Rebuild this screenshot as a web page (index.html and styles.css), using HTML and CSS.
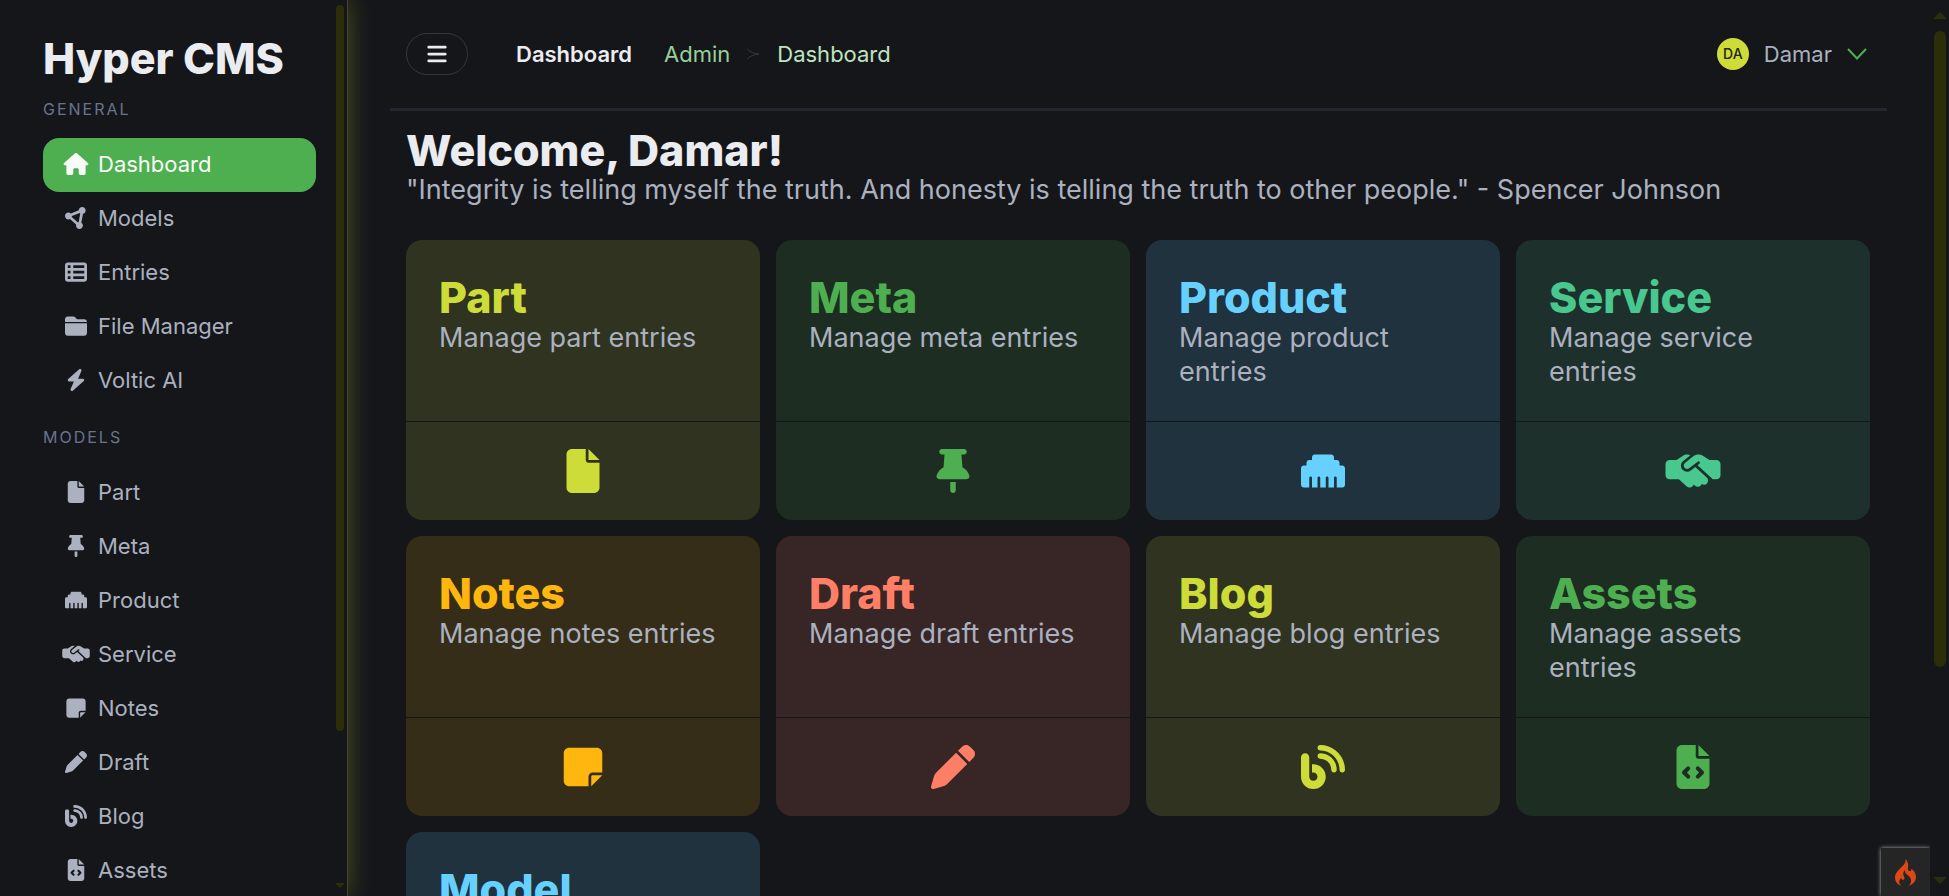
FILE: index.html
```html
<!DOCTYPE html>
<html lang="en">
<head>
<meta charset="utf-8">
<meta name="viewport" content="width=device-width, initial-scale=1">
<title>Hyper CMS - Dashboard</title>
<link rel="stylesheet" href="styles.css">
</head>
<body>
<svg class="sprite" aria-hidden="true">
  <symbol id="i-house" viewBox="0 0 576 512"><path d="M575.8 255.5c0 18-15 32.100-32 32.100h-32l.7 160.200c0 2.700-.2 5.400-.5 8.100V472c0 22.100-17.900 40-40 40H392c-22.100 0-40-17.900-40-40V384c0-17.700-14.300-32-32-32H256c-17.700 0-32 14.300-32 32v88c0 22.100-17.900 40-40 40H104c-22.100 0-40-17.900-40-40V287.600H32c-18 0-32-14-32-32.100c0-9 3-17 10-24L266.400 8c7-7 15-8 22-8s15 2 21 7L564.800 231.500c8 7 12 15 11 24z"/></symbol>
  <symbol id="i-nodes" viewBox="0 0 512 512"><path d="M418.400 157.900c35.300-8.300 61.600-40 61.600-77.900c0-44.200-35.800-80-80-80c-43.400 0-78.700 34.500-80 77.500L136.200 151.100C121.700 136.800 101.900 128 80 128c-44.200 0-80 35.800-80 80s35.800 80 80 80c12.200 0 23.800-2.700 34.100-7.600L259.700 407.800c-2.400 7.600-3.700 15.800-3.700 24.200c0 44.200 35.800 80 80 80s80-35.800 80-80c0-27.700-14-52.100-35.400-66.400l37.800-207.700zM156.300 232.200c2.200-6.900 3.500-14.200 3.700-21.700l183.800-73.500c3.600 3.500 7.400 6.700 11.600 9.500L317.600 354.100c-5.500 1.300-10.800 3.100-15.800 5.500L156.300 232.200z"/></symbol>
  <symbol id="i-list" viewBox="0 0 512 512"><path d="M0 96C0 60.700 28.700 32 64 32H448c35.300 0 64 28.700 64 64V416c0 35.300-28.700 64-64 64H64c-35.300 0-64-28.700-64-64V96zm64 0v64h64V96H64zm384 0H192v64H448V96zM64 224v64h64V224H64zm384 0H192v64H448V224zM64 352v64h64V352H64zm384 0H192v64H448V352z"/></symbol>
  <symbol id="i-folder" viewBox="0 0 512 512"><path d="M448 480H64c-35.300 0-64-28.700-64-64V192H512V416c0 35.300-28.700 64-64 64zm64-320H0V96C0 60.700 28.700 32 64 32H192c20.100 0 39.100 9.500 51.200 25.600l19.200 25.600c6 8.100 15.500 12.800 25.600 12.800H448c35.300 0 64 28.700 64 64z"/></symbol>
  <symbol id="i-bolt" viewBox="0 0 448 512"><path d="M349.400 44.600c5.900-13.700 1.500-29.700-10.600-38.500s-28.600-8-39.900 1.800l-256 224c-10 8.800-13.600 22.900-8.900 35.300S50.700 288 64 288H175.500L98.600 467.400c-5.900 13.700-1.500 29.700 10.600 38.500s28.600 8 39.900-1.800l256-224c10-8.800 13.600-22.900 8.900-35.300s-16.600-20.700-30-20.700H272.500L349.400 44.600z"/></symbol>
  <symbol id="i-file" viewBox="0 0 384 512"><path d="M0 64C0 28.700 28.700 0 64 0H224V128c0 17.700 14.300 32 32 32H384V448c0 35.300-28.700 64-64 64H64c-35.300 0-64-28.700-64-64V64zm384 64H256V0L384 128z"/></symbol>
  <symbol id="i-pin" viewBox="0 0 384 512"><path d="M32 32C32 14.300 46.300 0 64 0H320c17.700 0 32 14.300 32 32s-14.300 32-32 32H290.500l11.400 148.200c36.700 19.900 65.700 53.200 79.500 94.700l1 3c3.300 9.800 1.600 20.500-4.400 28.800s-15.700 13.300-26 13.300H32c-10.300 0-19.900-4.900-26-13.300s-7.700-19.100-4.400-28.800l1-3c13.800-41.500 42.800-74.800 79.500-94.700L93.500 64H64C46.300 64 32 49.700 32 32zM160 384h64v96c0 17.700-14.300 32-32 32s-32-14.300-32-32V384z"/></symbol>
  <symbol id="i-ethernet" viewBox="0 0 512 512"><path d="M0 224V416c0 17.700 14.300 32 32 32H96V336c0-8.800 7.200-16 16-16s16 7.200 16 16V448h64V336c0-8.800 7.200-16 16-16s16 7.200 16 16V448h64V336c0-8.800 7.200-16 16-16s16 7.200 16 16V448h64V336c0-8.800 7.200-16 16-16s16 7.200 16 16V448h64c17.700 0 32-14.300 32-32V224c0-17.700-14.300-32-32-32H448V160c0-17.700-14.300-32-32-32H384V96c0-17.700-14.300-32-32-32H160c-17.700 0-32 14.300-32 32v32H96c-17.700 0-32 14.300-32 32v32H32c-17.700 0-32 14.300-32 32z"/></symbol>
  <symbol id="i-handshake" viewBox="0 0 640 512"><path d="M323.400 85.200l-96.800 78.400c-16.100 13-19.200 36.400-7 53.100c12.900 17.800 38 21.300 55.300 7.800l99.300-77.200c7-5.400 17-4.200 22.500 2.800s4.200 17-2.800 22.500l-20.900 16.200L550.200 352H592c26.500 0 48-21.500 48-48V176c0-26.500-21.500-48-48-48H511.300l-3.900-2.500L434.800 79c-15.300-9.800-33.200-15-51.400-15c-21.800 0-43 7.500-60 21.200zm22.800 124.400l-51.700 40.200C263 274.300 217.300 268 193.700 235.600c-22.200-30.500-16.600-73.100 12.700-96.800l83.200-67.300c-11.600-4.900-24.100-7.400-36.800-7.400C234 64 215.700 69.600 200 80l-72 48H48c-26.500 0-48 21.500-48 48V304c0 26.500 21.500 48 48 48H156.200l91.400 83.400c19.600 17.900 49.900 16.500 67.800-3.100c5.500-6.100 9.200-13.200 11.100-20.600l17 15.600c19.500 17.900 49.900 16.600 67.800-2.900c4.500-4.900 7.800-10.600 9.900-16.500c19.400 13 45.800 10.300 62.100-7.500c17.900-19.500 16.600-49.900-2.900-67.800l-134.200-123z"/></symbol>
  <symbol id="i-note" viewBox="0 0 448 512"><path d="M64 32C28.700 32 0 60.700 0 96V416c0 35.300 28.700 64 64 64H288V368c0-26.500 21.500-48 48-48H448V96c0-35.300-28.700-64-64-64H64zM448 352H336c-8.800 0-16 7.200-16 16V480l32-32 64-64 32-32z"/></symbol>
  <symbol id="i-pen" viewBox="0 0 512 512"><path d="M362.700 19.300L314.300 67.700 444.300 197.700l48.400-48.400c25-25 25-65.500 0-90.500L453.300 19.300c-25-25-65.500-25-90.500 0zm-71 71L58.600 323.500c-10.400 10.400-18 23.300-22.200 37.400L1 481.200C-1.500 489.700 .8 498.800 7 505s15.300 8.500 23.700 6.100l120.300-35.400c14.100-4.200 27-11.800 37.400-22.200L421.700 220.300 291.700 90.300z"/></symbol>
  <symbol id="i-blog" viewBox="0 0 512 512"><path d="M192 32c0 17.700 14.300 32 32 32c123.700 0 224 100.300 224 224c0 17.700 14.300 32 32 32s32-14.300 32-32C512 128.900 383.100 0 224 0c-17.700 0-32 14.300-32 32zm0 96c0 17.700 14.300 32 32 32c70.700 0 128 57.300 128 128c0 17.700 14.300 32 32 32s32-14.300 32-32c0-106-86-192-192-192c-17.700 0-32 14.300-32 32zM96 144c0-26.500-21.500-48-48-48S0 117.500 0 144V368c0 79.500 64.500 144 144 144s144-64.500 144-144s-64.500-144-144-144H128v96h16c26.500 0 48 21.500 48 48s-21.500 48-48 48s-48-21.500-48-48V144z"/></symbol>
  <symbol id="i-code" viewBox="0 0 384 512"><path d="M64 0C28.700 0 0 28.700 0 64V448c0 35.300 28.700 64 64 64H320c35.300 0 64-28.700 64-64V160H256c-17.700 0-32-14.300-32-32V0H64zM256 0V128H384L256 0zM153 289l-31 31 31 31c9.400 9.400 9.400 24.600 0 33.900s-24.600 9.400-33.900 0L71 337c-9.400-9.400-9.400-24.600 0-33.900l48-48c9.400-9.400 24.600-9.400 33.900 0s9.400 24.600 0 33.900zM265 255l48 48c9.400 9.400 9.400 24.600 0 33.900l-48 48c-9.400 9.400-24.600 9.400-33.900 0s-9.400-24.600 0-33.900l31-31-31-31c-9.400-9.400-9.400-24.600 0-33.900s24.600-9.400 33.900 0z"/></symbol>
  <symbol id="i-bars" viewBox="0 0 448 512"><path d="M32 64H416a32 32 0 0 1 0 64H32a32 32 0 0 1 0-64zM32 224H416a32 32 0 0 1 0 64H32a32 32 0 0 1 0-64zM32 384H416a32 32 0 0 1 0 64H32a32 32 0 0 1 0-64z"/></symbol>
  <symbol id="i-flame" viewBox="0 0 21 27"><path d="M10.500 0C11 3.500 9 5.500 6 8.500C3 11.500 0 14.500 0 18.500C0 22.500 2.500 25.500 6.500 26.800C4.800 25.500 4 24 4.200 22.300C4.400 20.800 5.300 19.700 6.500 18.800C6.200 20.200 7 21 8 20.800C10.500 20.300 9.200 17.500 8.500 16.500C8 14.500 8.300 12.500 10 11.300C9.700 14.500 12 15.300 14 17.200C16.800 20 17 24 13.500 26.800C18 25.500 21 22 21 18C21 14.500 19 11.500 16.200 9.500C16.800 11.500 15.500 12.500 14.300 12C12.300 11.200 13 9 13.200 7C13.300 4 12 1.500 10.500 0z"/></symbol>
</svg>

<div class="layout">
  <aside class="sidebar">
    <div class="sidebar-body">
      <a class="brand" href="#">Hyper CMS</a>
      <p class="menu-label">General</p>
      <nav class="menu" aria-label="General">
        <a class="menu-link is-active" href="#"><span class="menu-icon"><svg class="icon"><use href="#i-house"/></svg></span>Dashboard</a>
        <a class="menu-link" href="#"><span class="menu-icon"><svg class="icon"><use href="#i-nodes"/></svg></span>Models</a>
        <a class="menu-link" href="#"><span class="menu-icon"><svg class="icon"><use href="#i-list"/></svg></span>Entries</a>
        <a class="menu-link" href="#"><span class="menu-icon"><svg class="icon"><use href="#i-folder"/></svg></span>File Manager</a>
        <a class="menu-link" href="#"><span class="menu-icon"><svg class="icon"><use href="#i-bolt"/></svg></span>Voltic AI</a>
      </nav>
      <p class="menu-label">Models</p>
      <nav class="menu" aria-label="Models">
        <a class="menu-link" href="#"><span class="menu-icon"><svg class="icon"><use href="#i-file"/></svg></span>Part</a>
        <a class="menu-link" href="#"><span class="menu-icon"><svg class="icon"><use href="#i-pin"/></svg></span>Meta</a>
        <a class="menu-link" href="#"><span class="menu-icon"><svg class="icon"><use href="#i-ethernet"/></svg></span>Product</a>
        <a class="menu-link" href="#"><span class="menu-icon"><svg class="icon"><use href="#i-handshake"/></svg></span>Service</a>
        <a class="menu-link" href="#"><span class="menu-icon"><svg class="icon"><use href="#i-note"/></svg></span>Notes</a>
        <a class="menu-link" href="#"><span class="menu-icon"><svg class="icon"><use href="#i-pen"/></svg></span>Draft</a>
        <a class="menu-link" href="#"><span class="menu-icon"><svg class="icon"><use href="#i-blog"/></svg></span>Blog</a>
        <a class="menu-link" href="#"><span class="menu-icon"><svg class="icon"><use href="#i-code"/></svg></span>Assets</a>
      </nav>
    </div>
    <div class="scroll scroll-side" aria-hidden="true">
      <span class="thumb"></span>
      <span class="arrow arrow-down"></span>
    </div>
  </aside>

  <main class="main">
    <header class="topbar">
      <button class="toggle" type="button" aria-label="Toggle menu"><svg class="icon"><use href="#i-bars"/></svg></button>
      <strong class="page-name">Dashboard</strong>
      <nav class="crumbs" aria-label="Breadcrumb">
        <a class="crumb" href="#">Admin</a>
        <svg class="crumb-sep" viewBox="0 0 13 12" aria-hidden="true"><path d="M0 1C3 4 7 5.500 12 6C7 6.500 3 8 0 11"/></svg>
        <a class="crumb is-current" href="#">Dashboard</a>
      </nav>
      <button class="user" type="button">
        <span class="avatar">DA</span>
        <span>Damar</span>
        <svg class="chevron" viewBox="0 0 20 12" aria-hidden="true"><path d="M1 1L10 10.500L19 1"/></svg>
      </button>
    </header>

    <div class="content">
      <h1 class="title">Welcome, Damar!</h1>
      <p class="subtitle">"Integrity is telling myself the truth. And honesty is telling the truth to other people." - Spencer Johnson</p>

      <div class="cards">
        <a class="card lime" href="#"><span class="card-body"><span class="title">Part</span><span class="subtitle">Manage part entries</span></span><span class="card-foot"><svg class="icon"><use href="#i-file"/></svg></span></a>
        <a class="card green" href="#"><span class="card-body"><span class="title">Meta</span><span class="subtitle">Manage meta entries</span></span><span class="card-foot"><svg class="icon"><use href="#i-pin"/></svg></span></a>
        <a class="card blue" href="#"><span class="card-body"><span class="title">Product</span><span class="subtitle">Manage product entries</span></span><span class="card-foot"><svg class="icon"><use href="#i-ethernet"/></svg></span></a>
        <a class="card teal" href="#"><span class="card-body"><span class="title">Service</span><span class="subtitle">Manage service entries</span></span><span class="card-foot"><svg class="icon"><use href="#i-handshake"/></svg></span></a>
        <a class="card amber" href="#"><span class="card-body"><span class="title">Notes</span><span class="subtitle">Manage notes entries</span></span><span class="card-foot"><svg class="icon"><use href="#i-note"/></svg></span></a>
        <a class="card red" href="#"><span class="card-body"><span class="title">Draft</span><span class="subtitle">Manage draft entries</span></span><span class="card-foot"><svg class="icon"><use href="#i-pen"/></svg></span></a>
        <a class="card lime" href="#"><span class="card-body"><span class="title">Blog</span><span class="subtitle">Manage blog entries</span></span><span class="card-foot"><svg class="icon"><use href="#i-blog"/></svg></span></a>
        <a class="card green" href="#"><span class="card-body"><span class="title">Assets</span><span class="subtitle">Manage assets entries</span></span><span class="card-foot"><svg class="icon"><use href="#i-code"/></svg></span></a>
        <a class="card blue" href="#"><span class="card-body"><span class="title">Model</span></span></a>
      </div>
    </div>
  </main>

  <div class="scroll scroll-page" aria-hidden="true">
    <span class="arrow arrow-up"></span>
    <span class="thumb"></span>
    <span class="arrow arrow-down"></span>
  </div>
  <div class="debug-clip">
    <button class="debug" type="button" aria-label="Debug toolbar"><svg class="flame"><use href="#i-flame"/></svg></button>
  </div>
</div>
</body>
</html>
```
FILE: styles.css
```css
:root {
  --bg: #15161a;
  --text: #abb1bf;
  --strong: #ebecf0;
  --muted: #69748c;
  --line: #24252e;
  --green: #4eaf50;
  --lime: #cddc39;
  --thumb: #2c2e0a;
}

*, *::before, *::after { box-sizing: border-box; }

body {
  margin: 0;
  background: var(--bg);
  color: var(--text);
  font-family: Inter, "Liberation Sans", sans-serif;
  font-size: 22px;
  line-height: 32px;
}

a { color: inherit; text-decoration: none; }

button {
  padding: 0;
  border: 0;
  background: none;
  color: inherit;
  font: inherit;
  cursor: pointer;
}

.sprite { position: absolute; width: 0; height: 0; }

.icon {
  display: block;
  width: 100%;
  height: 1em;
  fill: currentColor;
}

.layout {
  position: relative;
  display: flex;
  height: 100vh;
  overflow: hidden;
}

/* Sidebar */
.sidebar {
  position: relative;
  flex: none;
  width: 348px;
  border-right: 1px solid #45452a;
  box-shadow: 0 0 24px rgba(205, 220, 57, .3);
  clip-path: inset(0 -40px 0 0);
}

.sidebar-body {
  height: 100%;
  padding: 36px 31px 0 43px;
  overflow: hidden;
}

.brand {
  display: block;
  color: var(--strong);
  font-size: 43px;
  font-weight: 800;
  line-height: 44px;
}

.menu-label {
  margin: 16px 0;
  color: var(--muted);
  font-size: 16px;
  line-height: 26px;
  letter-spacing: 2px;
  text-transform: uppercase;
}

.menu { display: flex; flex-direction: column; }

.menu-link {
  display: flex;
  align-items: center;
  gap: 5px;
  height: 54px;
  padding: 0 16px 2px;
  border-radius: 16px;
}

.menu-icon { width: 34px; }

.menu-link.is-active { background: var(--green); color: #f8fcf8; }

/* Header */
.main {
  flex: 1;
  min-width: 0;
  margin-right: 19px;
  padding: 0 43px 0 42px;
}

.topbar {
  display: flex;
  align-items: center;
  height: 111px;
  padding: 0 20px 0 16px;
  border-bottom: 3px solid var(--line);
}

.toggle {
  width: 62px;
  height: 42px;
  border: 1px solid #34353f;
  border-radius: 21px;
  color: var(--strong);
}

.page-name { margin-left: 48px; color: var(--strong); font-weight: 600; }

.crumbs {
  display: flex;
  align-items: center;
  gap: 17px;
  margin-left: 32px;
}

.crumb { color: #97d099; }
.crumb.is-current { color: #c0e4c1; }

.crumb-sep {
  width: 13px;
  height: 12px;
  fill: none;
  stroke: #353742;
}

.user {
  display: flex;
  align-items: center;
  gap: 15px;
  margin-left: auto;
}

.avatar {
  width: 32px;
  height: 32px;
  border-radius: 50%;
  background: var(--lime);
  color: #22250a;
  font-size: 14px;
  font-weight: 500;
}

.chevron {
  width: 20px;
  height: 12px;
  fill: none;
  stroke: var(--green);
  stroke-width: 2;
}

/* Content */
.content { padding: 16px 17px 0 16px; }

.title {
  display: block;
  margin: 0;
  color: var(--strong);
  font-size: 43px;
  font-weight: 800;
  line-height: 46px;
}

.subtitle {
  display: block;
  margin: 0;
  font-size: 27px;
  line-height: 34px;
}

.cards {
  display: grid;
  grid-template-columns: repeat(4, 1fr);
  grid-auto-rows: 280px;
  gap: 16px;
  margin-top: 33px;
}

.card {
  display: flex;
  flex-direction: column;
  border-radius: 16px;
}

.card-body { flex: 1; padding: 33px 36px 27px 33px; }

.card .title { color: var(--accent); line-height: 48px; }

.card-foot {
  padding: 27px;
  border-top: 1px solid var(--bg);
  color: var(--accent);
  font-size: 44px;
}

.lime { --accent: #cddc39; background: #30331f; }
.green { --accent: #4eaf50; background: #1d2d22; }
.blue { --accent: #66d1ff; background: #20323d; }
.teal { --accent: #48c78e; background: #1e302c; }
.amber { --accent: #ffb70f; background: #362d18; }
.red { --accent: #ff7f66; background: #382526; }

/* Scroll rails */
.scroll { position: absolute; top: 0; bottom: 0; }
.scroll-side { right: 3px; width: 8px; }
.scroll-page { right: 3px; width: 12px; }

.thumb {
  position: absolute;
  left: 0;
  right: 0;
  border-radius: 6px;
  background: var(--thumb);
}

.scroll-side .thumb { top: 5px; height: 81%; }
.scroll-page .thumb { top: 31px; height: 71%; }

.arrow {
  position: absolute;
  left: -1px;
  right: -1px;
  height: 7px;
  background: var(--thumb);
}

.scroll-side .arrow { height: 5px; }
.arrow-up { top: 12px; clip-path: polygon(50% 0, 100% 100%, 0 100%); }
.arrow-down { bottom: 12px; clip-path: polygon(0 0, 100% 0, 50% 100%); }
.scroll-side .arrow-down { bottom: 8px; }

/* Debug toolbar button */
.debug-clip {
  position: absolute;
  right: 19px;
  bottom: 0;
  padding: 8px 0 0 8px;
  overflow: hidden;
}

.debug {
  display: flex;
  align-items: center;
  justify-content: center;
  width: 49px;
  height: 48px;
  background: #252525;
  box-shadow: 0 0 4px #b0b0b0;
}

.flame { width: 21px; height: 27px; fill: #dd4814; }
```
